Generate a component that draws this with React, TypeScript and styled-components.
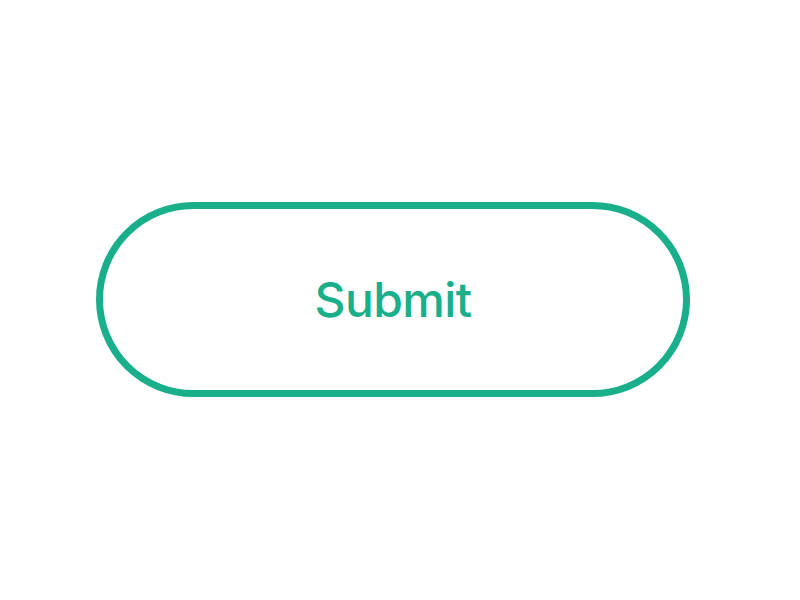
import React from "react";
import styled, { createGlobalStyle } from "styled-components";

const GlobalStyle = createGlobalStyle`
  html, body {
    margin: 0;
    padding: 0;
    background: #ffffff;
  }
  * {
    box-sizing: border-box;
  }
`;

const Page = styled.div`
  display: flex;
  align-items: center;
  justify-content: center;
  width: 800px;
  height: 599px;
  padding-right: 14px;
`;

const OutlineButton = styled.button<{ $color: string }>`
  display: flex;
  align-items: center;
  justify-content: center;
  width: 594px;
  height: 195px;
  border: 7px solid ${(p) => p.$color};
  border-radius: 9999px;
  background: #ffffff;
  color: ${(p) => p.$color};
  font-family: Inter, "Liberation Sans", sans-serif;
  font-size: 48px;
  font-weight: 500;
  letter-spacing: -0.6px;
  padding: 0;
  cursor: pointer;
`;

export default function App() {
  return (
    <>
      <GlobalStyle />
      <Page>
        <OutlineButton $color="#1aaf8b">Submit</OutlineButton>
      </Page>
    </>
  );
}
